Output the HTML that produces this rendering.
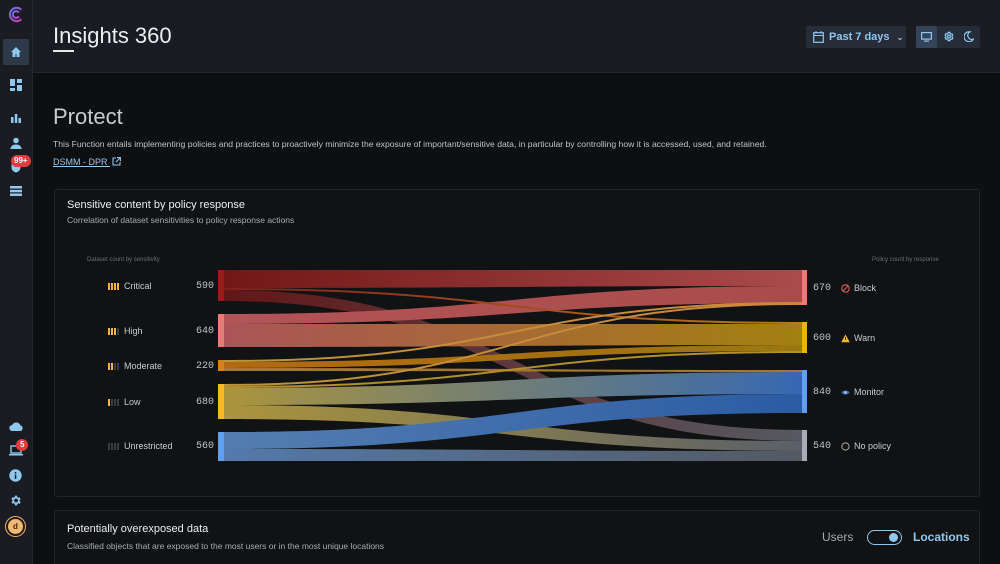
<!DOCTYPE html>
<html><head><meta charset="utf-8"><style>
*{box-sizing:border-box;margin:0;padding:0}
html,body{width:1000px;height:564px;overflow:hidden}
body{background:#0e0f11;font-family:"Liberation Sans",sans-serif;color:#d8dadf;position:relative}
.side{position:absolute;left:0;top:0;width:33px;height:564px;background:#1a1c21;border-right:1px solid #25272c}
.hdr{position:absolute;left:33px;top:0;right:0;height:73px;background:#1a1c22;border-bottom:1px solid #25272c}
.badge{position:absolute;background:#e33b3b;color:#fff;font-size:8px;font-weight:bold;border-radius:8px;padding:1px 3px;line-height:10px}
.card{position:absolute;left:54px;right:20px;background:#111213;border:1px solid #222429;border-radius:3px;overflow:hidden}
.mono{font-family:"Liberation Mono",monospace;font-size:10px;color:#bfc2c7}
.lab{position:absolute;font-size:9px;color:#c8cbd0;display:flex;align-items:center;height:10px}
.bars{display:inline-flex;gap:1px;margin-right:5px}
.bars i{display:block;width:2px;height:7px;background:#3a3c40}
.bars i.on{background:#f2b64a}
</style></head><body>
<div class="side">
  <svg style="position:absolute;left:7px;top:5px" width="19" height="19" viewBox="0 0 20 20"><defs><linearGradient id="lg" x1="0" y1="0" x2="1" y2="1"><stop offset="0" stop-color="#5a7cf0"/><stop offset="1" stop-color="#d03ab0"/></linearGradient></defs><path d="M15 5A7 7 0 1 0 15 15M12.5 8A3.5 3.5 0 1 0 12.5 12" fill="none" stroke="url(#lg)" stroke-width="2.2"/></svg>
  <div style="position:absolute;left:3px;top:39px;width:26px;height:26px;background:#2e3a4a;border-radius:2px"></div>
  <svg style="position:absolute;left:10px;top:46px" width="12" height="12" viewBox="0 0 12 12"><path d="M6 1L1 6h1.5v5h3V8h1v3h3V6H11z" fill="#8ec8f0"/></svg>
  <svg style="position:absolute;left:10px;top:79px" width="12" height="12" viewBox="0 0 12 12" fill="#8ec8f0"><rect x="0" y="0" width="5" height="7"/><rect x="7" y="0" width="5" height="4"/><rect x="0" y="9" width="5" height="3"/><rect x="7" y="6" width="5" height="6"/></svg>
  <svg style="position:absolute;left:10px;top:112px" width="12" height="12" viewBox="0 0 12 12" fill="#8ec8f0"><rect x="1" y="5" width="2.5" height="6"/><rect x="4.8" y="2" width="2.5" height="9"/><rect x="8.5" y="6" width="2.5" height="5"/></svg>
  <svg style="position:absolute;left:10px;top:137px" width="12" height="12" viewBox="0 0 12 12" fill="#8ec8f0"><circle cx="6" cy="3.5" r="2.8"/><path d="M0.5 12c0-3 2.5-4.5 5.5-4.5s5.5 1.5 5.5 4.5z"/></svg>
  <svg style="position:absolute;left:10px;top:161px" width="12" height="12" viewBox="0 0 12 12"><path d="M6 1l4.5 2v3.5c0 2.5-2 4.5-4.5 5-2.5-.5-4.5-2.5-4.5-5V3z" fill="#8ec8f0"/></svg>
  <div class="badge" style="left:11px;top:155px">99+</div>
  <svg style="position:absolute;left:10px;top:185px" width="12" height="12" viewBox="0 0 12 12" fill="#8ec8f0"><rect x="0" y="1" width="12" height="2.5"/><rect x="0" y="4.8" width="12" height="2.5"/><rect x="0" y="8.5" width="12" height="2.5"/></svg>
  <svg style="position:absolute;left:9px;top:421px" width="14" height="10" viewBox="0 0 14 10"><path d="M3.5 10a3 3 0 0 1-.3-6A4.5 4.5 0 0 1 11.5 4.5 2.8 2.8 0 0 1 11 10z" fill="#8ec8f0"/></svg>
  <svg style="position:absolute;left:9px;top:445px" width="14" height="11" viewBox="0 0 14 11"><rect x="2" y="1" width="10" height="7" fill="none" stroke="#8ec8f0" stroke-width="1.4"/><rect x="0" y="9" width="14" height="1.5" fill="#8ec8f0"/></svg>
  <div class="badge" style="left:16px;top:439px;padding:1px 4px">5</div>
  <svg style="position:absolute;left:9px;top:469px" width="13" height="13" viewBox="0 0 13 13"><circle cx="6.5" cy="6.5" r="6.2" fill="#8ec8f0"/><rect x="5.8" y="5.5" width="1.5" height="4.5" fill="#1a1c21"/><circle cx="6.5" cy="3.8" r=".9" fill="#1a1c21"/></svg>
  <svg style="position:absolute;left:9px;top:494px" width="13" height="13" viewBox="0 0 24 24"><path fill="#8ec8f0" d="M19.4 13a7.5 7.5 0 0 0 0-2l2.1-1.6-2-3.5-2.5 1a7.4 7.4 0 0 0-1.7-1L15 3h-4l-.4 2.7a7.4 7.4 0 0 0-1.7 1l-2.5-1-2 3.5L6.6 11a7.5 7.5 0 0 0 0 2l-2.1 1.6 2 3.5 2.5-1a7.4 7.4 0 0 0 1.7 1L11 21h4l.4-2.7a7.4 7.4 0 0 0 1.7-1l2.5 1 2-3.5zM13 15.5a3.5 3.5 0 1 1 0-7 3.5 3.5 0 0 1 0 7z"/></svg>
  <div style="position:absolute;left:5px;top:516px;width:21px;height:21px;border-radius:50%;border:1px solid #f2b36a;padding:2px"><div style="width:15px;height:15px;border-radius:50%;background:#f4b870;color:#3a2a10;font-size:8px;font-weight:bold;display:flex;align-items:center;justify-content:center">d</div></div>
</div>
<div class="hdr">
  <div style="position:absolute;left:20px;top:23px;font-size:22px;color:#eceef1">Insights 360</div>
  <div style="position:absolute;left:20px;top:50px;width:21px;height:2px;background:#e6e8ea"></div>
  <div style="position:absolute;left:773px;top:26px;width:100px;height:22px;background:#262c38;border-radius:2px;font-size:11px;color:#8ec8f0;font-weight:bold;line-height:22px;padding-left:23px">Past 7 days <span style="font-size:8px;margin-left:4px">&#8964;</span>
    <svg style="position:absolute;left:7px;top:5px" width="11" height="12" viewBox="0 0 11 12"><rect x=".7" y="1.7" width="9.6" height="9.6" fill="none" stroke="#8ec8f0" stroke-width="1.2"/><line x1=".7" y1="4.5" x2="10.3" y2="4.5" stroke="#8ec8f0"/><line x1="3" y1="0" x2="3" y2="2.5" stroke="#8ec8f0"/><line x1="8" y1="0" x2="8" y2="2.5" stroke="#8ec8f0"/></svg></div>
  <div style="position:absolute;left:883px;top:26px;width:64px;height:22px;background:#262c38;border-radius:2px">
    <div style="position:absolute;left:0;top:0;width:21px;height:22px;background:#33445a;border-radius:2px"></div>
    <svg style="position:absolute;left:5px;top:6px" width="11" height="10" viewBox="0 0 11 10"><rect x=".6" y=".6" width="9.8" height="6.5" fill="none" stroke="#8ec8f0" stroke-width="1.2"/><rect x="3" y="8.5" width="5" height="1.2" fill="#8ec8f0"/></svg>
    <svg style="position:absolute;left:27px;top:5px" width="11" height="11" viewBox="0 0 24 24"><path fill="none" stroke="#8ec8f0" stroke-width="2.5" d="M19.4 13a7.5 7.5 0 0 0 0-2l2.1-1.6-2-3.5-2.5 1a7.4 7.4 0 0 0-1.7-1L15 3h-4l-.4 2.7a7.4 7.4 0 0 0-1.7 1l-2.5-1-2 3.5L6.6 11a7.5 7.5 0 0 0 0 2l-2.1 1.6 2 3.5 2.5-1a7.4 7.4 0 0 0 1.7 1L11 21h4l.4-2.7a7.4 7.4 0 0 0 1.7-1l2.5 1 2 -3.5z"/><circle cx="13" cy="12" r="3" fill="none" stroke="#8ec8f0" stroke-width="2.5"/></svg>
    <svg style="position:absolute;left:48px;top:5px" width="10" height="11" viewBox="0 0 10 11"><path d="M6 .8A5 5 0 1 0 9.5 8 4 4 0 0 1 6 .8z" fill="none" stroke="#8ec8f0" stroke-width="1.2"/></svg>
  </div>
</div>
<div style="position:absolute;left:53px;top:104px;font-size:22px;color:#c9ccd1">Protect</div>
<div style="position:absolute;left:53px;top:139px;font-size:8.6px;color:#c0c3c8">This Function entails implementing policies and practices to proactively minimize the exposure of important/sensitive data, in particular by controlling how it is accessed, used, and retained.</div>
<div style="position:absolute;left:53px;top:157px;font-size:9px;color:#8ec8f0;text-decoration:underline">DSMM - DPR <svg width="9" height="9" viewBox="0 0 9 9" style="vertical-align:-1px;margin-left:2px"><path d="M4 1H1v7h7V5M5 .6h3.4V4M8.4.6 4 5" fill="none" stroke="#8ec8f0" stroke-width="1.1"/></svg></div>

<div class="card" style="top:189px;height:308px">
  <div style="position:absolute;left:12px;top:9px;font-size:11px;color:#eceef1">Sensitive content by policy response</div>
  <div style="position:absolute;left:12px;top:25px;font-size:8.5px;color:#a8abb1">Correlation of dataset sensitivities to policy response actions</div>
</div>
<div style="position:absolute;left:87px;top:257px;font-size:6px;color:#6a6f7a">Dataset count by sensitivity</div>
<div style="position:absolute;left:872px;top:257px;font-size:6px;color:#6a6f7a">Policy count by response</div>

<div class="lab" style="left:108px;top:281px"><span class="bars"><i class="on"></i><i class="on"></i><i class="on"></i><i class="on"></i></span>Critical</div>
<div class="lab" style="left:108px;top:326px"><span class="bars"><i class="on"></i><i class="on"></i><i class="on"></i><i></i></span>High</div>
<div class="lab" style="left:108px;top:361px"><span class="bars"><i class="on"></i><i class="on"></i><i></i><i></i></span>Moderate</div>
<div class="lab" style="left:108px;top:397px"><span class="bars"><i class="on"></i><i></i><i></i><i></i></span>Low</div>
<div class="lab" style="left:108px;top:441px"><span class="bars"><i></i><i></i><i></i><i></i></span>Unrestricted</div>
<div class="mono" style="position:absolute;left:196px;top:281px">590</div>
<div class="mono" style="position:absolute;left:196px;top:326px">640</div>
<div class="mono" style="position:absolute;left:196px;top:361px">220</div>
<div class="mono" style="position:absolute;left:196px;top:397px">680</div>
<div class="mono" style="position:absolute;left:196px;top:441px">560</div>
<div class="mono" style="position:absolute;left:813px;top:283px">670</div>
<div class="mono" style="position:absolute;left:813px;top:333px">600</div>
<div class="mono" style="position:absolute;left:813px;top:387px">840</div>
<div class="mono" style="position:absolute;left:813px;top:441px">540</div>
<div class="lab" style="left:841px;top:283px"><svg width="9" height="9" viewBox="0 0 9 9" style="margin-right:4px"><circle cx="4.5" cy="4.5" r="3.7" fill="none" stroke="#e06060" stroke-width="1.1"/><line x1="2" y1="7" x2="7" y2="2" stroke="#e06060" stroke-width="1.1"/></svg>Block</div>
<div class="lab" style="left:841px;top:333px"><svg width="9" height="9" viewBox="0 0 9 9" style="margin-right:4px"><path d="M4.5 .5L8.8 8.3H.2z" fill="#f2b830"/><rect x="4.1" y="3" width=".8" height="3" fill="#111"/></svg>Warn</div>
<div class="lab" style="left:841px;top:387px"><svg width="9" height="9" viewBox="0 0 9 9" style="margin-right:4px"><path d="M.3 4.5C2 1.8 7 1.8 8.7 4.5 7 7.2 2 7.2.3 4.5z" fill="#3a6ab0"/><circle cx="4.5" cy="4.5" r="1.4" fill="#9cc4f0"/></svg>Monitor</div>
<div class="lab" style="left:841px;top:441px"><svg width="9" height="9" viewBox="0 0 9 9" style="margin-right:4px"><circle cx="4.5" cy="4.5" r="3.6" fill="none" stroke="#aaa" stroke-width="1"/></svg>No policy</div>

<svg style="position:absolute;left:0;top:0" width="1000" height="564">
<defs>
<linearGradient id="g1"><stop offset="0" stop-color="#7a1818"/><stop offset="1" stop-color="#b85050"/></linearGradient>
<linearGradient id="g2"><stop offset="0" stop-color="#8a2020"/><stop offset="1" stop-color="#d08020"/></linearGradient>
<linearGradient id="g3"><stop offset="0" stop-color="#7a1818"/><stop offset="1" stop-color="#6a6e78"/></linearGradient>
<linearGradient id="g4"><stop offset="0" stop-color="#c05a5e"/><stop offset="1" stop-color="#b85050"/></linearGradient>
<linearGradient id="g5"><stop offset="0" stop-color="#b85a5e"/><stop offset="1" stop-color="#b08a10"/></linearGradient>
<linearGradient id="g6"><stop offset="0" stop-color="#c07010"/><stop offset="1" stop-color="#a88010"/></linearGradient>
<linearGradient id="g7"><stop offset="0" stop-color="#b8a040"/><stop offset="1" stop-color="#3a70c0"/></linearGradient>
<linearGradient id="g8"><stop offset="0" stop-color="#b8a040"/><stop offset="1" stop-color="#606670"/></linearGradient>
<linearGradient id="g9"><stop offset="0" stop-color="#5a88c0"/><stop offset="1" stop-color="#2e62b0"/></linearGradient>
<linearGradient id="g10"><stop offset="0" stop-color="#5a82b8"/><stop offset="1" stop-color="#5a606a"/></linearGradient>
<linearGradient id="g11"><stop offset="0" stop-color="#c8a040"/><stop offset="1" stop-color="#e09040"/></linearGradient>
</defs>
<g opacity=".92">
<path d="M224,270C513,270 513,270 802,270L802,286C513,286 513,288 224,288Z" fill="url(#g1)"/>
<path d="M224,290C513,290 513,430 802,430L802,441C513,441 513,301 224,301Z" fill="url(#g3)" opacity=".85"/>
<path d="M224,314C513,314 513,286 802,286L802,303C513,303 513,324 224,324Z" fill="url(#g4)"/>
<path d="M224,324C513,324 513,324 802,324L802,345C513,345 513,347 224,347Z" fill="url(#g5)"/>
<path d="M224,362C513,362 513,345 802,345L802,351C513,351 513,368 224,368Z" fill="url(#g6)"/>
<path d="M224,388C513,388 513,372 802,372L802,394C513,394 513,405 224,405Z" fill="url(#g7)"/>
<path d="M224,405C513,405 513,441 802,441L802,451C513,451 513,419 224,419Z" fill="url(#g8)"/>
<path d="M224,432C513,432 513,394 802,394L802,413C513,413 513,449 224,449Z" fill="url(#g9)"/>
<path d="M224,449C513,449 513,451 802,451L802,461C513,461 513,461 224,461Z" fill="url(#g10)"/>
<path d="M224,288C513,288 513,322 802,322L802,324C513,324 513,290 224,290Z" fill="url(#g2)"/>
<path d="M224,360C513,360 513,302 802,302L802,304C513,304 513,362 224,362Z" fill="url(#g11)"/>
<path d="M224,368C513,368 513,370 802,370L802,372C513,372 513,371 224,371Z" fill="#b08030"/>
<path d="M224,384C513,384 513,303 802,303L802,305C513,305 513,386 224,386Z" fill="url(#g11)"/>
<path d="M224,386C513,386 513,351 802,351L802,353C513,353 513,388 224,388Z" fill="#c09a30"/>
</g>
<rect x="218" y="270" width="6" height="31" fill="#a01818"/>
<rect x="218" y="314" width="6" height="33" fill="#f07878"/>
<rect x="218" y="360" width="6" height="11" fill="#e08010"/>
<rect x="218" y="384" width="6" height="35" fill="#f8b828"/>
<rect x="218" y="432" width="6" height="29" fill="#60a0f0"/>
<rect x="802" y="270" width="5" height="35" fill="#f07878"/>
<rect x="802" y="322" width="5" height="31" fill="#e8b410"/>
<rect x="802" y="370" width="5" height="43" fill="#60a0f0"/>
<rect x="802" y="430" width="5" height="31" fill="#a8acb4"/>
</svg>

<div class="card" style="top:510px;height:70px">
  <div style="position:absolute;left:12px;top:12px;font-size:11px;color:#eceef1">Potentially overexposed data</div>
  <div style="position:absolute;left:12px;top:30px;font-size:8.5px;color:#a8abb1">Classified objects that are exposed to the most users or in the most unique locations</div>
  <div style="position:absolute;left:767px;top:19px;font-size:12px;color:#a8abb1">Users</div>
  <div style="position:absolute;left:812px;top:19px;width:35px;height:15px;border:1.5px solid #8ec8f0;border-radius:8px"><div style="position:absolute;right:3px;top:2px;width:9px;height:9px;border-radius:50%;background:#8ec8f0"></div></div>
  <div style="position:absolute;left:858px;top:19px;font-size:12px;color:#8ec8f0;font-weight:bold">Locations</div>
</div>
</body></html>
